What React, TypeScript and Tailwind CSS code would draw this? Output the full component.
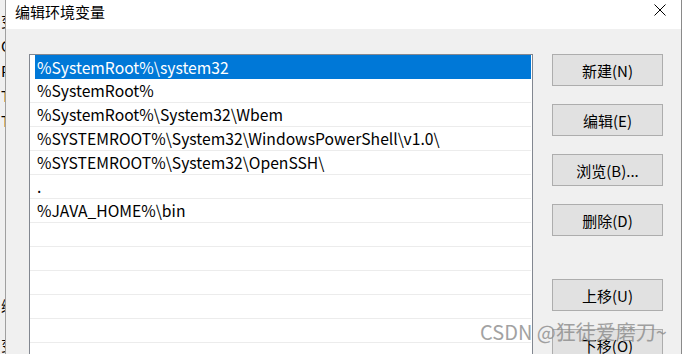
import React from 'react';

const paths = [
  '%SystemRoot%\\system32',
  '%SystemRoot%',
  '%SystemRoot%\\System32\\Wbem',
  '%SYSTEMROOT%\\System32\\WindowsPowerShell\\v1.0\\',
  '%SYSTEMROOT%\\System32\\OpenSSH\\',
  '.',
  '%JAVA_HOME%\\bin',
  '',
  '',
  '',
  '',
  '',
];

const font = { fontFamily: '"Noto Sans CJK SC", "Noto Sans", sans-serif' };

function DialogButton({ label, className = '' }: { label: string; className?: string }) {
  return (
    <button
      type="button"
      className={`h-[32px] w-[111px] shrink-0 border border-[#adadad] bg-[#e1e1e1] text-[15px] leading-none text-black ${className}`}
    >
      {label}
    </button>
  );
}

export default function App() {
  return (
    <div
      className="relative flex h-[354px] w-[683px] overflow-hidden bg-white"
      style={font}
    >
      {/* window behind the dialog, mostly covered */}
      <div className="flex w-[6px] shrink-0 flex-col overflow-hidden border-r border-[#a0a0a0] bg-[#f0f0f0] pl-[1px] text-[15px] leading-[25px] text-black">
        <span className="mt-[8px]">变</span>
        <span>C</span>
        <span>P</span>
        <span>T</span>
        <span>T</span>
        <div className="mt-[80px] h-px w-full bg-[#a0a0a0]" />
        <span className="mt-[80px]">编</span>
        <span className="mt-[14px]">变</span>
      </div>

      <div className="flex w-[676px] shrink-0 flex-col border-r border-[#8a8a8a]">
        <div className="flex h-[29px] shrink-0 items-start justify-between bg-white pl-[9px] pr-[15px] pt-[3px]">
          <span className="text-[15px] leading-[18px] text-black">编辑环境变量</span>
          <svg width="12" height="12" viewBox="0 0 12 12" className="mt-[1px]">
            <path d="M0.5 0.5 L11.5 11.5 M11.5 0.5 L0.5 11.5" stroke="#000" strokeWidth="1" />
          </svg>
        </div>

        <div className="flex flex-1 items-start bg-[#f0f0f0] pl-[23px] pt-[25px]">
          <div className="h-[320px] w-[504px] shrink-0 border border-[#828790] bg-white pr-[1px]">
            {paths.map((p, i) => (
              <div
                key={i}
                className={
                  i === 0
                    ? 'ml-[5px] flex h-[24px] items-center bg-[#0078d7] pl-[2px] pt-[2px] text-[15.7px] text-white'
                    : 'flex h-[24px] items-center border-b border-[#ececec] pl-[7px] pt-[1px] text-[15.7px] text-black'
                }
              >
                {p}
              </div>
            ))}
          </div>

          <div className="ml-[19px] flex flex-col">
            <DialogButton label="新建(N)" />
            <DialogButton label="编辑(E)" className="mt-[18px]" />
            <DialogButton label="浏览(B)..." className="mt-[18px]" />
            <DialogButton label="删除(D)" className="mt-[18px]" />
            <DialogButton label="上移(U)" className="mt-[43px]" />
            <DialogButton label="下移(O)" className="mt-[18px]" />
          </div>
        </div>
      </div>

      <span className="pointer-events-none absolute left-[480px] top-[322px] text-[20px] leading-none text-[#8c8c8c] opacity-80">
        CSDN @狂徒爱磨刀~
      </span>
    </div>
  );
}
